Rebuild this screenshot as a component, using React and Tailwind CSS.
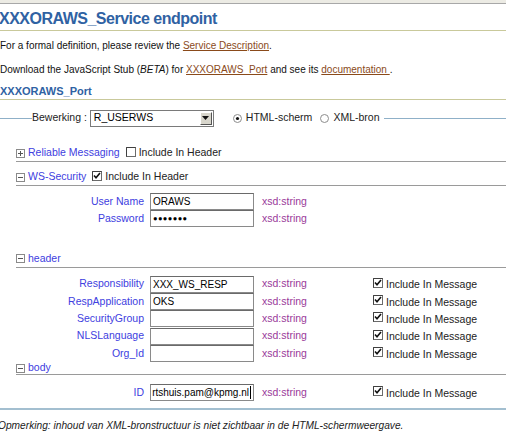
// App.jsx — WS service endpoint test page

function CheckBox({ checked }) {
  return (
    <svg width="10" height="10" viewBox="0 0 10 10" className="shrink-0">
      <rect x="0.5" y="0.5" width="9" height="9" fill="#fff" stroke="#6b6b6b" />
      <path d="M0.5 9.5V0.5H9.5" fill="none" stroke="#404040" />
      {checked && <path d="M2 4.5L4 6.8L8 2" fill="none" stroke="#111" strokeWidth="1.6" />}
    </svg>
  );
}

function Toggle({ open }) {
  return (
    <svg width="9" height="9" viewBox="0 0 9 9" className="shrink-0">
      <rect x="0.5" y="0.5" width="8" height="8" fill="#fff" stroke="#8a8a8a" />
      <path d="M2 4.5H7" stroke="#555" />
      {!open && <path d="M4.5 2V7" stroke="#555" />}
    </svg>
  );
}

function Radio({ on }) {
  return (
    <svg width="9" height="9" viewBox="0 0 9 9" className="shrink-0">
      <circle cx="4.5" cy="4.5" r="4" fill="#fff" stroke="#8c8c8c" />
      {on && <circle cx="4.5" cy="4.5" r="1.6" fill="#111" />}
    </svg>
  );
}

function Field({ label, value, dots, scrolled, include }) {
  return (
    <div className="flex items-center h-[17.3px] text-[10.5px]">
      <div className="w-[144px] text-right text-[#4040e0]">{label}</div>
      <div
        className={`ml-[6px] w-[104px] h-[17px] shrink-0 border border-[#8a8a8a] border-t-[#6a6a6a] bg-white flex items-center px-[2px] text-[10px] text-black overflow-hidden whitespace-nowrap ${
          scrolled ? "justify-end" : ""
        }`}
      >
        {dots ? <span className="text-[7.5px] tracking-[0.4px]">●●●●●●●</span> : value}
        {scrolled && <span className="ml-[1px] w-px h-[13px] bg-black shrink-0" />}
      </div>
      <div className="ml-[8px] w-[111px] text-[#9a3a9a]">xsd:string</div>
      {include && (
        <div className="flex items-center gap-[3px] text-[#222]">
          <span className="mt-[-3px]">
            <CheckBox checked />
          </span>
          <span className="mt-[2px]">Include In Message</span>
        </div>
      )}
    </div>
  );
}

function Section({ open, title, h = "h-[17px]", children }) {
  return (
    <div className={`flex items-center gap-[3px] ml-[16px] ${h} border-b border-[#9a9a9a] text-[10.5px]`}>
      <Toggle open={open} />
      <span className="text-[#4040e0]">{title}</span>
      {children}
    </div>
  );
}

export default function App() {
  return (
    <div
      className="w-[506px] h-[433px] overflow-hidden bg-white"
      style={{ fontFamily: "'Liberation Sans', Arial, sans-serif" }}
    >
      <div className="h-[4px] bg-[#ecebe4] border-b border-[#a8a8a8]" />

      <div className="h-[27px] flex items-end pb-[3px] border-b border-[#c9c99b]">
        <h1 className="text-[16px] tracking-[-0.5px] font-bold leading-none text-[#2f62a3] ml-[-1px]">
          XXXORAWS_Service endpoint
        </h1>
      </div>

      <div className="mt-[3px] h-[24px] leading-[24px] text-[10px] text-[#111]">
        For a formal definition, please review the{" "}
        <span className="underline text-[#8a4a1a]">Service Description</span>.
      </div>
      <div className="h-[24px] leading-[24px] text-[10px] text-[#111]">
        Download the JavaScript Stub (<i>BETA</i>) for{" "}
        <span className="underline text-[#8a4a1a]">XXXORAWS_Port</span> and see its{" "}
        <span className="underline text-[#8a4a1a]">documentation </span>.
      </div>

      <div className="h-[18px] leading-[18px] border-b border-[#c9c99b] text-[11px] font-bold text-[#2f62a3]">
        XXXORAWS_Port
      </div>

      <div className="mt-[9px] h-[18px] flex items-center text-[10.5px] text-[#222]">
        <div className="w-[32px] h-px bg-[#8fb0c8]" />
        <span>Bewerking :</span>
        <div className="ml-[3px] w-[124px] h-[17px] border border-[#7a7a7a] bg-white flex items-center justify-between pl-[3px] pr-[1px]">
          <span className="text-black">R_USERWS</span>
          <div className="w-[12px] h-[13px] bg-[#d8d6cc] border border-t-white border-l-white border-r-[#555] border-b-[#555] flex items-center justify-center">
            <svg width="7" height="4" viewBox="0 0 7 4">
              <path d="M0 0H7L3.5 4Z" fill="#111" />
            </svg>
          </div>
        </div>
        <div className="ml-[19px] flex items-center gap-[4px]">
          <Radio on />
          <span>HTML-scherm</span>
        </div>
        <div className="ml-[8px] flex items-center gap-[4px]">
          <Radio />
          <span>XML-bron</span>
        </div>
        <div className="ml-[5px] flex-1 h-px bg-[#8fb0c8]" />
      </div>

      <div className="mt-[18px]">
        <Section open={false} title="Reliable Messaging">
          <span className="ml-[3px] mt-[-2px]">
            <CheckBox />
          </span>
          <span className="text-[#222]">Include In Header</span>
        </Section>
      </div>

      <div className="mt-[7px]">
        <Section open title="WS-Security">
          <span className="ml-[3px] mt-[-2px]">
            <CheckBox checked />
          </span>
          <span className="text-[#222]">Include In Header</span>
        </Section>
      </div>

      <div className="mt-[7px]">
        <Field label="User Name" value="ORAWS" />
        <Field label="Password" dots />
      </div>

      <div className="mt-[23px]">
        <Section open title="header" />
      </div>

      <div className="mt-[8px]">
        <Field label="Responsibility" value="XXX_WS_RESP" include />
        <Field label="RespApplication" value="OKS" include />
        <Field label="SecurityGroup" value="" include />
        <Field label="NLSLanguage" value="" include />
        <Field label="Org_Id" value="" include />
      </div>

      <Section open title="body" h="h-[13px]" />

      <div className="mt-[9px]">
        <Field label="ID" value="rtshuis.pam@kpmg.nl" scrolled include />
      </div>

      <div className="mt-[7px] h-[2px] bg-[#a3bfd0]" />

      <div className="mt-[10px] ml-[-2px] text-[10.2px] leading-[12px] italic text-[#222] whitespace-nowrap">
        Opmerking: inhoud van XML-bronstructuur is niet zichtbaar in de HTML-schermweergave.
      </div>
    </div>
  );
}
